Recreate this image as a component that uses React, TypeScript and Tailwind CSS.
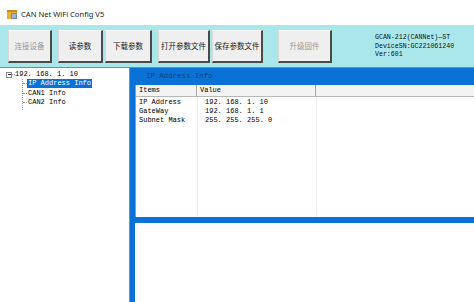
import React from "react"

const mono = { fontFamily: '"Liberation Mono", "DejaVu Sans Mono", monospace' }
const cjk = { fontFamily: '"Noto Sans CJK SC", "Noto Sans", sans-serif' }

function ToolButton({ label, disabled, className }: { label: string; disabled?: boolean; className?: string }) {
  return (
    <div
      style={cjk}
      className={
        "h-[33px] flex items-center justify-center bg-[#efefef] border-t border-l border-t-[#fafafa] border-l-[#d8d8d8] border-r-2 border-b-2 border-r-[#4a4a4a] border-b-[#4a4a4a] text-[7.5px] " +
        (disabled ? "text-[#9a9a9a] " : "text-[#1a1a1a] ") +
        (className ?? "")
      }
    >
      {label}
    </div>
  )
}

function TitleIcon() {
  return (
    <svg width="10" height="9" viewBox="0 0 10 9">
      <rect x="0" y="0" width="10" height="9" fill="#e8b23a" />
      <rect x="0" y="0" width="10" height="2" fill="#c98a1c" />
      <rect x="4" y="3" width="6" height="6" fill="#6f8fb3" />
      <rect x="5" y="4" width="4" height="4" fill="#9fb6d0" />
    </svg>
  )
}

const rows = [
  { item: "IP Address", value: "192. 168. 1. 10" },
  { item: "GateWay", value: "192. 168. 1. 1" },
  { item: "Subnet Mask", value: "255. 255. 255. 0" },
]

export default function App() {
  return (
    <div className="w-[474px] h-[302px] bg-white flex flex-col overflow-hidden">
      {/* Title bar */}
      <div className="h-[25px] flex items-center pl-[7px] pt-[4px] gap-[4px] shrink-0">
        <TitleIcon />
        <span className="text-[7.6px] text-[#1a1a1a]" style={{ fontFamily: '"Noto Sans", "Open Sans", sans-serif' }}>
          CAN Net WiFi Config V5
        </span>
      </div>

      {/* Toolbar */}
      <div className="h-[43px] shrink-0 bg-[#aae7eb] border-b border-[#5f8fb5] flex items-start pt-[5px] pl-[8px]">
        <ToolButton label="连接设备" disabled className="w-[44px]" />
        <ToolButton label="读参数" className="w-[45px] ml-[6px]" />
        <ToolButton label="下载参数" className="w-[47px] ml-[2px]" />
        <ToolButton label="打开参数文件" className="w-[52px] ml-[6px]" />
        <ToolButton label="保存参数文件" className="w-[51px] ml-[2px]" />
        <ToolButton label="升级固件" disabled className="w-[54px] ml-[15px]" />
        <div style={mono} className="ml-[43px] mt-[4px] text-[6.6px] leading-[8.5px] text-[#111]">
          <div>GCAN-212(CANNet)—ST</div>
          <div>DeviceSN:GC221061240</div>
          <div>Ver:601</div>
        </div>
      </div>

      {/* Main area */}
      <div className="flex-1 flex min-h-0">
        {/* Tree */}
        <div style={mono} className="w-[129px] shrink-0 bg-white text-[7px] text-black relative pt-[2px]">
          <div className="h-[9px] flex items-center">
            <span className="ml-[6px] w-[6px] h-[6px] border border-[#8a8a8a] flex items-center justify-center">
              <span className="w-[3px] h-px bg-[#333]" />
            </span>
            <span className="w-[3px] border-t border-dotted border-[#9a9a9a]" />
            <span>192. 168. 1. 10</span>
          </div>
          <div className="relative">
            {/* tree line */}
            <div className="absolute left-[22px] top-0 h-[31px] border-l border-dotted border-[#9a9a9a]" />
            <div className="h-[9px] flex items-center">
              <span className="ml-[23px] w-[4px] border-t border-dotted border-[#9a9a9a]" />
              <span className="bg-[#0a72d6] text-white px-[1px] h-[9px] leading-[9px]">IP Address Info</span>
            </div>
            <div className="h-[10px] flex items-center">
              <span className="ml-[23px] w-[4px] border-t border-dotted border-[#9a9a9a]" />
              <span className="px-[1px]">CAN1 Info</span>
            </div>
            <div className="h-[9px] flex items-center">
              <span className="ml-[23px] w-[4px] border-t border-dotted border-[#9a9a9a]" />
              <span className="px-[1px]">CAN2 Info</span>
            </div>
          </div>
        </div>

        {/* Vertical splitter */}
        <div className="w-[6px] shrink-0 bg-[#0a72d6] border-l border-[#4a9ae6]" />

        {/* Right pane */}
        <div className="flex-1 flex flex-col min-w-0">
          <div className="h-[17px] shrink-0 bg-[#0a72d6] flex items-center pl-[11px]">
            <span style={mono} className="text-[7.4px] text-[#0c3f7a]">IP Address Info</span>
          </div>

          {/* List */}
          <div style={mono} className="h-[132px] shrink-0 border-l border-[#9a9a9a] relative text-[7px] text-black">
            <div className="absolute left-[61px] top-[12px] bottom-0 border-l border-[#efefef]" />
            <div className="absolute left-[180px] top-[12px] bottom-0 border-l border-[#efefef]" />
            <div className="h-[12px] flex bg-[#f3f3f3] border-b border-[#b8b8b8]">
              <div className="w-[61px] pl-[3px] flex items-center border-r border-[#a8a8a8]">Items</div>
              <div className="w-[119px] pl-[3px] flex items-center border-r border-[#a8a8a8]">Value</div>
              <div className="flex-1" />
            </div>
            <div className="pt-[1px]">
              {rows.map((r) => (
                <div key={r.item} className="h-[9px] flex items-center">
                  <div className="w-[61px] pl-[3px]">{r.item}</div>
                  <div className="pl-[8px]">{r.value}</div>
                </div>
              ))}
            </div>
          </div>

          {/* Horizontal splitter */}
          <div className="h-[6px] shrink-0 bg-[#0a72d6]" />

          <div className="flex-1 bg-white" />
        </div>
      </div>
    </div>
  )
}
